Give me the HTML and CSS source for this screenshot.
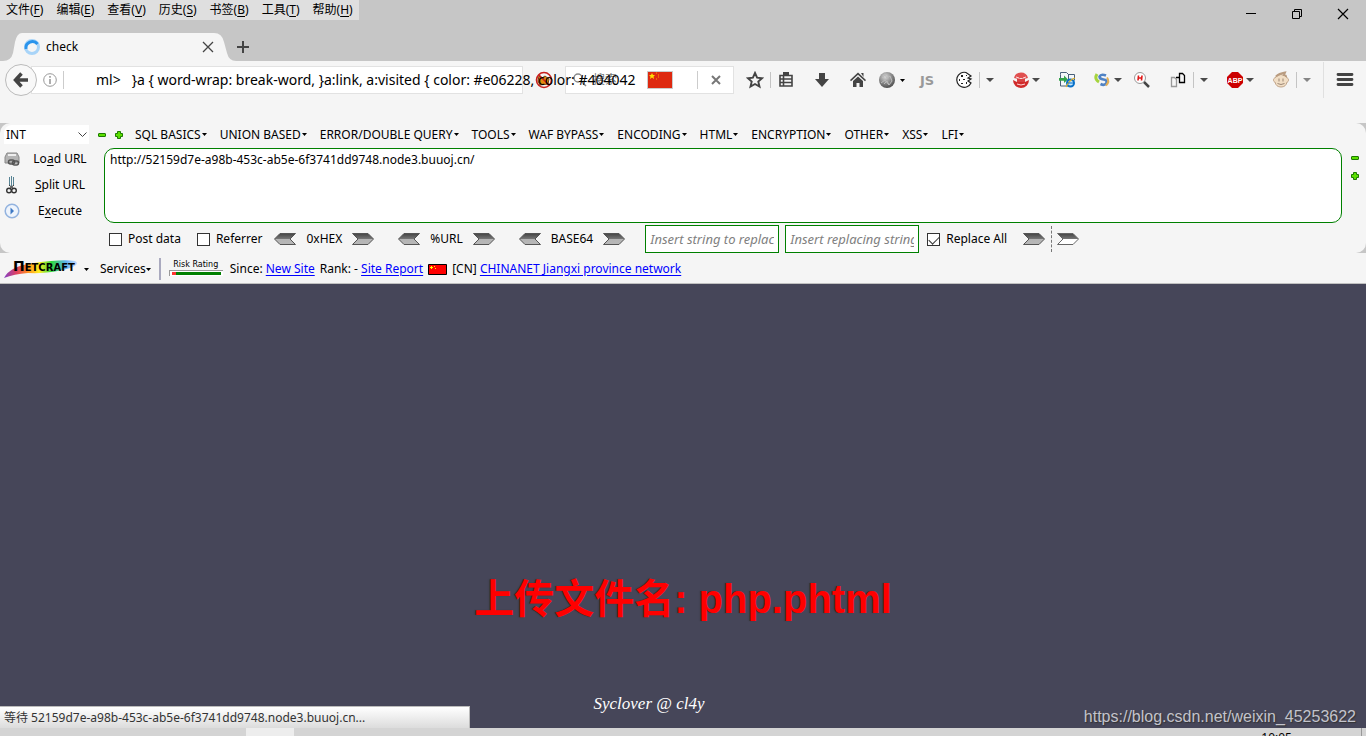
FILE: index.html
```html
<!DOCTYPE html>
<html lang="zh-CN">
<head>
<meta charset="utf-8">
<title>check</title>
<link rel="stylesheet" href="styles.css">
</head>
<body>
<svg class="defs" aria-hidden="true">
  <defs>
    <linearGradient id="steel" x1="0" y1="0" x2="0" y2="1"><stop offset="0" stop-color="#444"/><stop offset=".5" stop-color="#777"/><stop offset=".52" stop-color="#b4b4b4"/><stop offset="1" stop-color="#b8b8b8"/></linearGradient>
    <linearGradient id="steel-open" x1="0" y1="0" x2="0" y2="1"><stop offset="0" stop-color="#444"/><stop offset=".5" stop-color="#777"/><stop offset=".52" stop-color="#fff"/><stop offset="1" stop-color="#fff"/></linearGradient>
    <linearGradient id="rainbow"><stop offset="0" stop-color="#8040c8"/><stop offset=".17" stop-color="#e04060"/><stop offset=".33" stop-color="#ff9020"/><stop offset=".48" stop-color="#fff020"/><stop offset=".65" stop-color="#30d840"/><stop offset=".85" stop-color="#60b0f0"/><stop offset="1" stop-color="#c8dcff"/></linearGradient>
    <radialGradient id="globe" cx=".4" cy=".3" r=".7"><stop offset="0" stop-color="#d8d8d8"/><stop offset="1" stop-color="#505050"/></radialGradient>
    <symbol id="right" viewBox="0 0 22 12"><path d="M.5.5H16L21.500 6 16 11.500H.5L6 6z" fill="url(#steel)" stroke="#555"/></symbol>
    <symbol id="right-open" viewBox="0 0 22 12"><path d="M.5.5H16L21.500 6 16 11.500H.5L6 6z" fill="url(#steel-open)" stroke="#666"/></symbol>
    <symbol id="left" viewBox="0 0 22 12"><path d="M21.500.5H6L.5 6 6 11.500H21.500L16 6z" fill="url(#steel)" stroke="#555"/></symbol>
    <symbol id="minus" viewBox="0 0 8 8"><rect x=".5" y="2.500" width="7" height="3" rx=".5" fill="#5be000" stroke="#1d7a00"/></symbol>
    <symbol id="plus" viewBox="0 0 8 8"><path d="M2.500.5h3v2h2v3h-2v2h-3v-2h-2v-3h2z" fill="#5be000" stroke="#1d7a00" stroke-linejoin="round"/></symbol>
    <symbol id="caret" viewBox="0 0 8 4"><path d="M0 0h8L4 4z" fill="#4a4a4a"/></symbol>
    <symbol id="small-caret" viewBox="0 0 5 3"><path d="M0 0h5L2.500 3z"/></symbol>
  </defs>
</svg>

<header class="titlebar">
  <div class="top-row">
    <nav class="menubar">
      <button>文件(<u>F</u>)</button><button>编辑(<u>E</u>)</button><button>查看(<u>V</u>)</button><button>历史(<u>S</u>)</button><button>书签(<u>B</u>)</button><button>工具(<u>T</u>)</button><button>帮助(<u>H</u>)</button>
    </nav>
    <div class="window-buttons">
      <button aria-label="最小化"><svg width="12" height="12"><path d="M1 5.500h10" stroke="#000"/></svg></button>
      <button aria-label="还原"><svg width="12" height="12" fill="none" stroke="#000"><path d="M1.500 3.500h7v7h-7zM3.500 3V1.500h7v7H9"/></svg></button>
      <button aria-label="关闭"><svg width="12" height="12"><path d="M1 1l10 10M11 1L1 11" stroke="#000" stroke-width="1.200"/></svg></button>
    </div>
  </div>
  <div class="tabs">
    <div class="tab">
      <svg width="22" height="28" viewBox="0 0 22 28"><path d="M3 28Q11 28 13 20L15 9Q17 0 22 0V28z" fill="#f5f5f5"/></svg>
      <div class="tab-body">
        <svg width="18" height="18" fill="none" stroke-width="3"><circle cx="9" cy="9" r="6.500" stroke="#a8d4f8"/><path d="M3 11A6.500 6.500 0 0 1 14.500 6" stroke="#2a94ec"/></svg>
        <span class="tab-title">check</span>
        <button aria-label="关闭标签页"><svg width="12" height="12"><path d="M1 1l10 10M11 1L1 11" stroke="#444" stroke-width="1.300"/></svg></button>
      </div>
      <svg width="22" height="28" viewBox="0 0 22 28"><path d="M22 28Q15 28 13 20L10 9Q8 0 0 0V28z" fill="#f5f5f5"/></svg>
    </div>
    <button class="new-tab" aria-label="新标签页"><svg width="12" height="12"><path d="M0 6h12M6 0v12" stroke="#444" stroke-width="2"/></svg></button>
  </div>
</header>

<section class="navbar">
  <button class="back" aria-label="后退"><svg width="16" height="16"><path d="M8.500 1.500L2.500 8l6 6.500M3 8h12" fill="none" stroke="#444" stroke-width="3.500"/></svg></button>
  <div class="address">
    <svg width="14" height="14" fill="none" stroke="#999"><circle cx="7" cy="7" r="6.300"/><path d="M7 6v5M7 3v1.700" stroke-width="1.600"/></svg>
    <input aria-label="地址">
  </div>
  <svg class="blocked" width="18" height="18"><path d="M4 5l3 2 3-2 4 3-1 5-8 1-2-4z" fill="#e88a10" stroke="#7a4210"/><circle cx="9" cy="9" r="7.500" fill="none" stroke="#c8201c" stroke-width="1.600"/><path d="M4 4l10 10" stroke="#c8201c" stroke-width="1.600"/></svg>
  <div class="search">
    <svg width="14" height="14" fill="none" stroke="#888" stroke-width="1.500"><circle cx="5" cy="5" r="4"/><path d="M8 8l5 5"/></svg>
    <input aria-label="搜索" placeholder="搜索">
    <button aria-label="停止"><svg width="10" height="10"><path d="M1 1l8 8M9 1L1 9" stroke="#777" stroke-width="2"/></svg></button>
  </div>
  <div class="marquee"><span>ml&gt;   }a { word-wrap: break-word, }a:link, a:visited { color: #e06228, color: #404042</span>
    <svg width="26" height="18"><rect x=".5" y=".5" width="25" height="17" fill="#de2910" stroke="#ccc"/><path d="M5 2l1 2h2L6.500 5.500 7 8 5 6.500 3 8l.5-2.500L2 4h2z" fill="#ffde00"/><path d="M9 2h1M11 4h1M11 6h1M9 8h1" stroke="#ff9c00"/></svg>
  </div>
  <div class="tools">
    <button aria-label="书签"><svg width="18" height="18"><path d="M9 2l2.100 4.700 5 .5-3.800 3.400 1.200 5L9 13l-4.500 2.600 1.200-5L1.900 7.200l5-.5z" fill="none" stroke="#444" stroke-width="1.900"/></svg></button>
    <i class="sep tight"></i>
    <button class="tight" aria-label="书签列表"><svg width="18" height="18"><path d="M3 4.500h12v10.500H3zM3 8h12M3 11.500h12M6.500 5v10" fill="none" stroke="#444" stroke-width="1.600"/><path d="M6 1h6v4H6z" fill="#444"/></svg></button>
    <button class="wide" aria-label="下载"><svg width="18" height="18"><path d="M6 2h6v6h4l-7 8-7-8h4z" fill="#444"/></svg></button>
    <button class="wide" aria-label="主页"><svg width="18" height="18" fill="#444"><path d="M1 9l8-7.500L17 9l-1 1.200-7-6.500-7 6.500zM12 2h2.500v4z"/><path d="M4 10l5-4.500 5 4.500v6h-3.500v-4h-3v4H4z"/></svg></button>
    <button class="mid" aria-label="代理"><svg width="18" height="18"><circle cx="9" cy="9" r="8" fill="url(#globe)"/><path d="M4 7l3-3 2 3 3-2 2 5-3 4-2-4-3 3M3 12l4-3 4 5" fill="none" stroke="#bbb"/></svg></button>
    <button class="near" aria-label="代理选项"><svg width="5" height="3"><use href="#small-caret"/></svg></button>
    <button class="js mid">JS</button>
    <button class="wide" aria-label="Cookie"><svg width="18" height="18"><path d="M11 1.500A7.500 7.500 0 1 0 16 12l-3-2 3-2-3-1 3-2z" fill="#fff" stroke="#222" stroke-width="1.200"/><path d="M6 4h2v2H6zM4 8h1v2H4zM8 8h2v1H8zM6 12h2v1H6zM11 11h1v2h-1zM11 4h1v1h-1z" fill="#222"/></svg></button>
    <i class="sep tight"></i>
    <button class="tight" aria-label="Cookie 选项"><svg width="8" height="4"><use href="#caret"/></svg></button>
    <button class="wide" aria-label="伪装"><svg width="18" height="18"><path d="M2 7a7.200 7.200 0 0 1 14 0l-4 1-3-1-3 1z" fill="#e05050"/><path d="M1 9l4 2h8l4-2a8 8 0 0 1-16 0z" fill="#d02a2a"/><path d="M5 8h8v3H5z" fill="#d84040"/><path d="M4 6l3 1M11 7l3-1M5 13q4 2 8 0" fill="none" stroke="#ffdada"/></svg></button>
    <button class="near" aria-label="伪装选项"><svg width="8" height="4"><use href="#caret"/></svg></button>
    <button class="wide" aria-label="IE"><svg width="18" height="18"><path d="M2.500 3.500V1.500h6l2 2V15h-8zM10 3.500h6.500v6" fill="#f4f7fa" stroke="#49607a"/><path d="M1 7h5V4.500L10 8.500 6 12V9.700H1z" fill="#35a34b"/><circle cx="12.500" cy="12" r="3.500" fill="#bfe5ff" stroke="#0870c8" stroke-width="2"/><path d="M8 16Q12 8 17 7" fill="none" stroke="#e6b020" stroke-width="1.200"/><path d="M10 12h6" stroke="#0870c8"/></svg></button>
    <button class="wide" aria-label="同步"><svg width="18" height="18" fill="none"><path d="M3 3Q0 8 5 11" stroke="#a6d43e" stroke-width="3"/><path d="M12 4.500Q7 2.500 5.500 5.500q0 2.500 4 3t3 3.500q-2 3-6 1" stroke="#4f82c4" stroke-width="2.600"/><path d="M13 6.500q3 4-1 8" stroke="#e2ae54" stroke-width="2"/></svg></button>
    <button class="near" aria-label="同步选项"><svg width="8" height="4"><use href="#caret"/></svg></button>
    <button class="mid" aria-label="HTTP"><svg width="18" height="18"><circle cx="7" cy="7" r="5.500" fill="#fff" stroke="#999"/><path d="M11 11l5 5" stroke="#444" stroke-width="2.500"/><path d="M5.500 4.500L5 9.500M9 4.500l-.5 5M5 7h4" stroke="#e01818" stroke-width="1.600"/></svg></button>
    <button class="wide" aria-label="复制页面"><svg width="18" height="18" fill="none" stroke-width="1.300"><path d="M2.500 6.500h3l2 2v7h-5z" stroke="#999"/><path d="M10.500 2.500h3l2 2v7h-5zM7 6.500h3" stroke="#000"/></svg></button>
    <i class="sep tight"></i>
    <button class="tight" aria-label="页面选项"><svg width="8" height="4"><use href="#caret"/></svg></button>
    <button class="wide" aria-label="Adblock"><svg width="18" height="18"><path d="M6 1h6l5 5v6l-5 5H6l-5-5V6z" fill="#cc0000"/><text class="abp" x="9" y="12" text-anchor="middle">ABP</text></svg></button>
    <button class="near" aria-label="Adblock 选项"><svg width="8" height="4"><use href="#caret"/></svg></button>
    <button class="wide faded" aria-label="Greasemonkey"><svg width="18" height="18"><path d="M3 7Q4 3.500 9 3.500q5 0 6 3.500c2 0 2 4 0 4q-1 5-6 5t-6-5c-2 0-2-4 0-4z" fill="#f0d2ac" stroke="#a67b52"/><path d="M7 7.500v3M11 7.500v3M5.500 12.500q3.500 2 7 0" fill="none" stroke="#6b4c31"/><path d="M4 5.500q3-3 9-4l-1 2.500q2 0 2 2" fill="none" stroke="#9a6d43" stroke-width="2"/></svg></button>
    <i class="sep tight"></i>
    <button class="tight faded" aria-label="Greasemonkey 选项"><svg width="8" height="4"><use href="#caret"/></svg></button>
    <i class="sep tall"></i>
    <button aria-label="菜单"><svg width="18" height="18"><path d="M2 3.500h14M2 8.500h14M2 13.500h14" stroke="#444" stroke-width="2.800" stroke-linecap="round"/></svg></button>
  </div>
</section>

<section class="hackbar-wrap">
  <div class="hackbar">
    <div class="hack-menu">
      <div class="type"><select aria-label="类型"><option>INT</option></select><svg width="9" height="6"><path d="M.5.5l4 4 4-4" fill="none" stroke="#444"/></svg></div>
      <button class="sign" aria-label="减少"><svg width="8" height="8"><use href="#minus"/></svg></button>
      <button class="sign" aria-label="增加"><svg width="8" height="8"><use href="#plus"/></svg></button>
      <div class="hack-items">
        <button>SQL BASICS<svg width="5" height="3"><use href="#small-caret"/></svg></button>
        <button>UNION BASED<svg width="5" height="3"><use href="#small-caret"/></svg></button>
        <button>ERROR/DOUBLE QUERY<svg width="5" height="3"><use href="#small-caret"/></svg></button>
        <button>TOOLS<svg width="5" height="3"><use href="#small-caret"/></svg></button>
        <button>WAF BYPASS<svg width="5" height="3"><use href="#small-caret"/></svg></button>
        <button>ENCODING<svg width="5" height="3"><use href="#small-caret"/></svg></button>
        <button>HTML<svg width="5" height="3"><use href="#small-caret"/></svg></button>
        <button>ENCRYPTION<svg width="5" height="3"><use href="#small-caret"/></svg></button>
        <button>OTHER<svg width="5" height="3"><use href="#small-caret"/></svg></button>
        <button>XSS<svg width="5" height="3"><use href="#small-caret"/></svg></button>
        <button>LFI<svg width="5" height="3"><use href="#small-caret"/></svg></button>
      </div>
    </div>
    <div class="hack-main">
      <div class="actions">
        <button><svg width="16" height="16"><path d="M3 2h10l2 4v6H1V6z" fill="#b4b4b4" stroke="#888"/><path d="M4 4h8" stroke="#eee" stroke-width="2"/><rect x="4.500" y="9" width="6" height="4" rx="2" fill="none" stroke="#555" stroke-width="1.500"/><rect x="8.500" y="10" width="6" height="4" rx="2" fill="none" stroke="#555" stroke-width="1.500"/></svg><span>Lo<u>a</u>d URL</span></button>
        <button><svg width="16" height="18" fill="none"><path d="M5.500 1v8M7.500 0v10M9.500 1v8" stroke="#578394"/><path d="M5 9l5 4M10 9l-5 4" stroke="#333"/><circle cx="5" cy="14.500" r="2.300" stroke="#333" stroke-width="1.400"/><circle cx="10" cy="14.500" r="2.300" stroke="#333" stroke-width="1.400"/></svg><span><u>S</u>plit URL</span></button>
        <button><svg width="16" height="16"><circle cx="8" cy="8" r="6.800" fill="#eef4fc" stroke="#93b3df" stroke-width="1.500"/><path d="M6.500 4.500L10 8l-3.500 3.500z" fill="#3d78c4"/></svg><span>E<u>x</u>ecute</span></button>
      </div>
      <textarea aria-label="URL" spellcheck="false">http://52159d7e-a98b-453c-ab5e-6f3741dd9748.node3.buuoj.cn/</textarea>
      <div class="resize">
        <button aria-label="缩小"><svg width="8" height="8"><use href="#minus"/></svg></button>
        <button aria-label="放大"><svg width="8" height="8"><use href="#plus"/></svg></button>
      </div>
    </div>
    <div class="options">
      <label><input type="checkbox">Post data</label>
      <label class="gap-16"><input type="checkbox">Referrer</label>
      <div class="codec gap-12"><button aria-label="HEX 解码"><svg width="22" height="12"><use href="#left"/></svg></button><span>0xHEX</span><button aria-label="HEX 编码"><svg width="22" height="12"><use href="#right"/></svg></button></div>
      <div class="codec gap-24"><button aria-label="URL 解码"><svg width="22" height="12"><use href="#left"/></svg></button><span>%URL</span><button aria-label="URL 编码"><svg width="22" height="12"><use href="#right"/></svg></button></div>
      <div class="codec gap-24"><button aria-label="BASE64 解码"><svg width="22" height="12"><use href="#left"/></svg></button><span>BASE64</span><button aria-label="BASE64 编码"><svg width="22" height="12"><use href="#right"/></svg></button></div>
      <input class="text gap-20" aria-label="查找" placeholder="Insert string to replace">
      <input class="text gap-6" aria-label="替换" placeholder="Insert replacing string">
      <label class="gap-8"><input type="checkbox" checked>Replace All</label>
      <button class="gap-16" aria-label="替换全部"><svg width="22" height="12"><use href="#right"/></svg></button>
      <i class="dash"></i>
      <button aria-label="替换"><svg width="22" height="12"><use href="#right-open"/></svg></button>
    </div>
  </div>
</section>

<section class="netcraft">
  <button class="brand" aria-label="Netcraft"><svg width="76" height="20"><path d="M0 19Q6 7 30 4 58 0 71 2 77 5 66 9 48 15 24 14 10 15 0 19z" fill="url(#rainbow)"/><text class="brand-text" x="9" y="12"><tspan class="brand-cap">Π</tspan>ETCRAFT</text></svg></button>
  <button class="brand-menu" aria-label="Netcraft 菜单"><svg width="5" height="3"><use href="#small-caret"/></svg></button>
  <button class="services">Services<svg width="5" height="3"><use href="#small-caret"/></svg></button>
  <i class="bar"></i>
  <div class="risk"><span>Risk Rating</span><div class="meter"><i></i></div></div>
  <p><span>Since: <a href="#">New Site</a></span> <span>Rank: - <a href="#">Site Report</a></span> <svg width="19" height="11"><path d="M.5.5h18v10H.5z" fill="#f00" stroke="#000"/><path d="M3 2h1v1h1v1H4v1H3V4H2V3h1zM6 2h1v1H6zM7 4h1v1H7z" fill="#ff0"/></svg> <span>[CN] <a href="#">CHINANET Jiangxi province network</a></span></p>
</section>

<main class="page">
  <h1>上传文件名: php.phtml</h1>
  <footer>Syclover @ cl4y</footer>
  <div class="status">等待 52159d7e-a98b-453c-ab5e-6f3741dd9748.node3.buuoj.cn...</div>
  <div class="watermark">https://blog.csdn.net/weixin_45253622</div>
</main>
<div class="taskbar"><i class="task"></i><span class="clock">10:05</span><i class="edge"></i></div>
</body>
</html>
```

FILE: styles.css
```css
* { box-sizing: border-box; }
body {
  margin: 0;
  min-height: 100vh;
  display: flex;
  flex-direction: column;
  background: #f5f5f5;
  color: #000;
  font: 12px/18px "Noto Sans", "Noto Sans CJK SC", sans-serif;
}
button { display: flex; align-items: center; padding: 0; border: 0; background: none; color: inherit; font: inherit; white-space: nowrap; }
svg { display: block; flex: none; }
.defs { position: absolute; width: 0; height: 0; }
u { text-underline-offset: 2px; }

.titlebar { background: #c6c6c6; }
.top-row { display: flex; justify-content: space-between; height: 33px; }
.menubar { display: flex; gap: 13px; height: 20px; padding: 0 6px; background: #dfdfdf; }
.window-buttons { display: flex; gap: 34px; padding: 0 17px 6px 0; }
.tabs { display: flex; align-items: center; height: 28px; }
.tab { display: flex; }
.tab-body { display: flex; align-items: center; width: 192px; background: #f5f5f5; padding-left: 1px; }
.tab-title { flex: 1; margin-left: 5px; }
.new-tab { margin-left: 1px; }

.navbar { position: relative; display: flex; align-items: center; height: 62px; padding: 0 12px 24px 5px; }
.back { position: relative; z-index: 1; flex: none; justify-content: center; width: 32px; height: 32px; border: 1px solid #bbb; border-radius: 50%; background: #f8f8f8; }
.address { display: flex; align-items: center; flex: 1; height: 28px; margin-left: -6px; padding-left: 11px; border: 1px solid #e2e2e2; background: #fff; }
.address input, .search input { flex: 1; min-width: 0; border: 0; padding: 0; background: none; font: inherit; outline: 0; }
.address input { height: 18px; margin-left: 6px; border-left: 1px solid #ccc; }
.blocked { margin: 0 12px; }
.search { display: flex; align-items: center; width: 169px; height: 28px; padding-left: 7px; border: 1px solid #e2e2e2; background: #fff; }
.search input { margin-left: 6px; }
.search button { justify-content: center; width: 36px; height: 18px; border-left: 1px solid #ccc; }
.marquee { position: absolute; left: 96px; top: 9px; display: flex; align-items: center; gap: 11px; height: 20px; font-size: 14px; white-space: pre; pointer-events: none; }
.tools { display: flex; align-items: center; margin-left: 12px; }
.near { justify-content: center; width: 8px; margin-left: 2px; }
.tight { justify-content: center; margin-left: 6px; }
.mid { margin-left: 11px; }
.wide { margin-left: 18px; }
.sep { width: 1px; height: 16px; background: #c4c4c4; }
.sep.tall { height: 36px; margin: 0 12px; background: #e0e0e0; }
.js { justify-content: center; width: 20px; color: #999; font: bold 13px "DejaVu Sans", sans-serif; }
.abp { fill: #fff; font: bold 7px "Liberation Sans", sans-serif; }
.faded { opacity: .65; }

.hackbar-wrap { background: #c6c6c6; }
.hackbar { padding-left: 4px; border-radius: 10px; background: #f5f5f5; }
.hack-menu { display: flex; align-items: center; height: 25px; padding-bottom: 2px; }
.type { display: flex; align-items: center; width: 85px; height: 19px; background: #fff; border-radius: 8px 0 0 0; padding-right: 2px; }
.type select { flex: 1; appearance: none; border: 0; padding: 0 2px; background: none; font: inherit; color: inherit; }
.sign { margin-left: 9px; }
.hack-items { display: flex; gap: 13px; margin-left: 12px; }
.hack-items button { gap: 1px; }
.hack-main { display: flex; }
.actions { display: flex; flex-direction: column; gap: 8px; width: 100px; padding-top: 2px; }
.actions button { height: 18px; }
.actions span { width: 80px; text-align: center; }
.hack-main textarea { flex: 1; height: 75px; padding: 2px 5px; border: 1px solid #008000; border-radius: 10px; background: #fff; color: #000; font: inherit; resize: none; outline: 0; }
.resize { display: flex; flex-direction: column; gap: 10px; padding: 6px 7px 0 9px; }
.options { display: flex; align-items: center; height: 30px; padding: 2px 0 0 105px; white-space: nowrap; }
.options label { display: flex; align-items: center; gap: 6px; }
.options input[type=checkbox] { appearance: none; width: 13px; height: 13px; margin: 0; border: 1px solid #333; background: #fff; }
.options input:checked::after { content: ""; display: block; width: 9px; height: 5px; margin: 2px 1px; border: solid #333; border-width: 0 0 1px 1px; transform: rotate(-45deg); }
.codec { display: flex; align-items: center; gap: 10px; }
.text { width: 134px; height: 28px; padding: 0 4px; border: 1px solid #008000; background: #fff; font: inherit; font-size: 13px; outline: 0; }
.text::placeholder { color: #808080; font-style: italic; opacity: 1; }
.gap-6 { margin-left: 6px; }
.gap-8 { margin-left: 8px; }
.gap-12 { margin-left: 12px; }
.gap-16 { margin-left: 16px; }
.gap-20 { margin-left: 20px; }
.gap-24 { margin-left: 24px; }
.dash { height: 26px; margin: 0 5px 0 6px; border-left: 1px dashed #777; }

.netcraft { display: flex; align-items: center; height: 31px; padding: 2px 0 0 4px; border-bottom: 1px solid #c0c0c0; }
.brand-text { font: bold 10px "DejaVu Sans", sans-serif; }
.brand-cap { font-size: 14px; }
.brand-menu { margin-left: 4px; }
.services { margin-left: 11px; }
.bar { width: 2px; height: 22px; margin: 0 8px; background: #aaaabf; }
.risk { display: flex; flex-direction: column; align-items: center; width: 54px; padding-bottom: 2px; font: 8px/9px "DejaVu Sans", sans-serif; white-space: nowrap; }
.meter { width: 54px; height: 6px; margin-top: 1px; padding: 1px 2px; border: 1px solid #999; border-width: 1px 0 0 1px; background: #fff; }
.meter i { display: block; height: 3px; border-left: 4px solid #f33; background: #008000; }
.netcraft p { display: flex; align-items: center; gap: 5px; margin: 0 0 0 7px; white-space: nowrap; }
.netcraft a { color: #00f; text-underline-offset: 2px; }

.page { position: relative; flex: 1; display: flex; flex-direction: column; align-items: center; justify-content: flex-end; padding-bottom: 12px; background: #464659; }
.page h1 { margin: 0 0 68px; color: #f00; font: bold 40px/50px "Liberation Sans", "Noto Sans CJK SC", sans-serif; text-shadow: -1px 0 1px #333; }
.page footer { margin-right: 68px; color: #fff; font: italic 17px/24px "Liberation Serif", serif; }
.status { position: absolute; left: 0; bottom: 0; width: 470px; height: 22px; padding: 2px 4px; border: 1px solid #bbb; border-width: 1px 1px 0 0; background: linear-gradient(#fff, #dcdcdc); color: #333; }
.watermark { position: absolute; right: 10px; bottom: 1px; color: #c3c3cb; font: 16px/20px "Liberation Sans", sans-serif; text-shadow: 1px 1px 1px #333; }
.taskbar { display: flex; height: 8px; overflow: hidden; background: #d4d4d4; }
.task { width: 48px; margin-left: 246px; background: #ededed; }
.clock { margin: 2px 69px 0 auto; line-height: 16px; }
.edge { width: 1px; margin-right: 4px; background: #999; }
```
